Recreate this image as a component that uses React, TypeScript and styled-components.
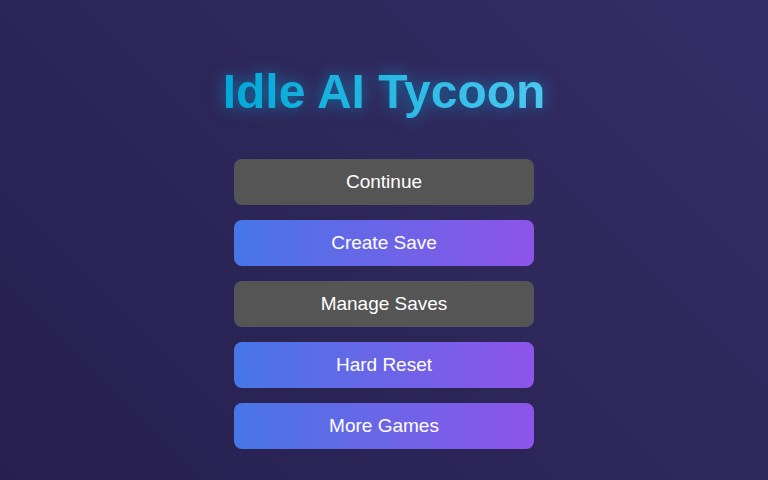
import React from "react";
import styled, { createGlobalStyle } from "styled-components";

const GlobalStyle = createGlobalStyle`
  html, body {
    margin: 0;
    padding: 0;
    height: 100%;
  }
  body {
    font-family: "Liberation Sans", Arial, sans-serif;
    background: #2c2659;
  }
  #root {
    height: 100%;
  }
`;

const menu = [
  { label: "Continue", primary: false },
  { label: "Create Save", primary: true },
  { label: "Manage Saves", primary: false },
  { label: "Hard Reset", primary: true },
  { label: "More Games", primary: true },
];

const App = () => {
  return (
    <Screen>
      <GlobalStyle />
      <Title>Idle AI Tycoon</Title>
      <Menu>
        {menu.map((item) => (
          <MenuButton key={item.label} $primary={item.primary}>
            {item.label}
          </MenuButton>
        ))}
      </Menu>
    </Screen>
  );
};

export default App;

const Screen = styled.div`
  height: 100%;
  box-sizing: border-box;
  padding-top: 64px;
  display: flex;
  flex-direction: column;
  align-items: center;
  background: linear-gradient(45deg, #261f50 0%, #2d2759 50%, #342d68 100%);
`;

const Title = styled.h1`
  margin: 0 0 39px;
  font-size: 48px;
  line-height: 56px;
  font-weight: bold;
  background: linear-gradient(90deg, #00a8d6, #4cc8f0);
  -webkit-background-clip: text;
  background-clip: text;
  color: transparent;
  filter: drop-shadow(0 0 8px rgba(0, 180, 230, 0.55));
`;

const Menu = styled.div`
  display: flex;
  flex-direction: column;
  gap: 15px;
`;

const MenuButton = styled.button<{ $primary: boolean }>`
  width: 300px;
  height: 46px;
  border: none;
  border-radius: 8px;
  font-family: "Liberation Sans", Arial, sans-serif;
  font-size: 19px;
  color: #fff;
  cursor: pointer;
  background: ${(p) =>
    p.$primary ? "linear-gradient(90deg, #4776e6, #8e54e9)" : "#555555"};
`;
